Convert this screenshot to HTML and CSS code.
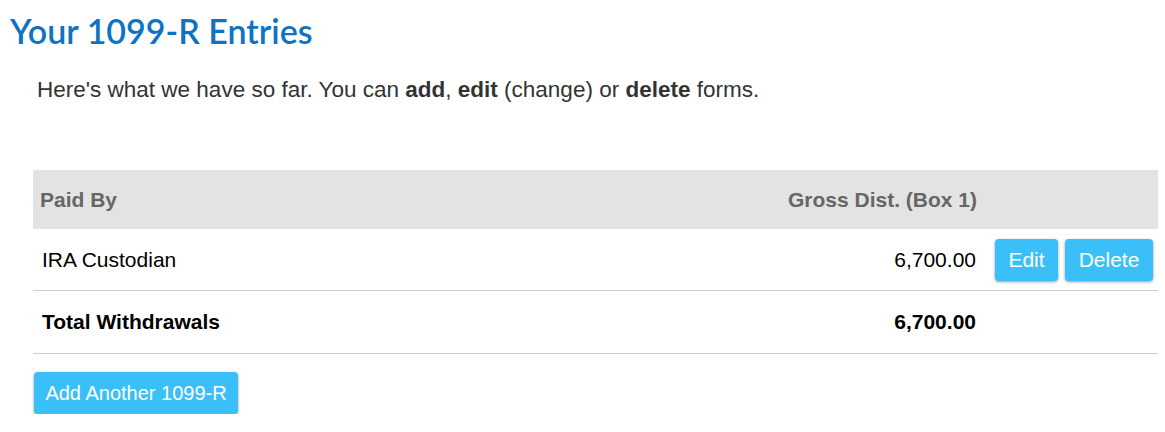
FILE: index.html
```html
<!DOCTYPE html>
<html>
<head>
<meta charset="utf-8">
<link rel="stylesheet" href="styles.css">
</head>
<body>
<div class="page">
  <h1 class="title">Your 1099-R Entries</h1>
  <p class="intro">Here's what we have so far. You can <b>add</b>, <b>edit</b> (change) or <b>delete</b> forms.</p>
  <table class="entries">
    <thead>
      <tr class="head-row">
        <th class="col-name">Paid By</th>
        <th class="col-amt">Gross Dist. (Box 1)</th>
        <th class="col-act"></th>
      </tr>
    </thead>
    <tbody>
      <tr class="row">
        <td class="col-name">IRA Custodian</td>
        <td class="col-amt">6,700.00</td>
        <td class="col-act"><div class="actions"><button class="btn btn-edit">Edit</button><button class="btn btn-del">Delete</button></div></td>
      </tr>
      <tr class="row total">
        <td class="col-name">Total Withdrawals</td>
        <td class="col-amt">6,700.00</td>
        <td class="col-act"></td>
      </tr>
    </tbody>
  </table>
  <button class="btn btn-add">Add Another 1099-R</button>
</div>
</body>
</html>
```
FILE: styles.css
```css
html, body {
  margin: 0;
  padding: 0;
  background: #ffffff;
}
.page {
  padding: 11px 7px 0 10px;
  font-family: "Liberation Sans", Arial, sans-serif;
}
.title {
  margin: 0;
  font-family: Lato, "Open Sans", sans-serif;
  font-weight: 600;
  font-size: 34px;
  color: #0f74c0;
  line-height: 40px;
}
.intro {
  margin: 26px 0 0 27px;
  font-size: 22.5px;
  line-height: 26px;
  color: #333333;
}
.intro b {
  font-weight: bold;
}
.entries {
  margin: 67px 0 0 23px;
  width: 1125px;
  border-collapse: collapse;
  font-size: 21px;
}
.head-row {
  background: #e3e3e3;
}
.head-row th {
  height: 59px;
  padding: 0;
  font-weight: bold;
  color: #666666;
  vertical-align: middle;
}
.col-name {
  text-align: left;
  padding-left: 9px !important;
}
.head-row .col-name {
  padding-left: 7px !important;
}
.col-amt {
  text-align: right;
  padding-right: 12px !important;
}
.head-row .col-amt {
  padding-right: 11px !important;
}
.col-act {
  width: 170px;
}
.row td {
  height: 61px;
  padding: 0;
  color: #000000;
  border-bottom: 1px solid #cccccc;
  vertical-align: middle;
}
.row.total td {
  height: 62px;
  font-weight: bold;
}
.actions {
  display: flex;
  gap: 7px;
  padding-left: 7px;
}
.btn {
  border: none;
  background: #3bbff8;
  color: #ffffff;
  font-family: "Liberation Sans", Arial, sans-serif;
  font-size: 21px;
  height: 42px;
  border-radius: 4px;
  box-shadow: 0 1px 3px rgba(0, 0, 0, 0.4);
  padding: 0;
  cursor: pointer;
}
.btn-edit {
  width: 63px;
}
.btn-del {
  width: 88px;
}
.btn-add {
  margin: 18px 0 0 24px;
  width: 204px;
  font-size: 20px;
}
```
